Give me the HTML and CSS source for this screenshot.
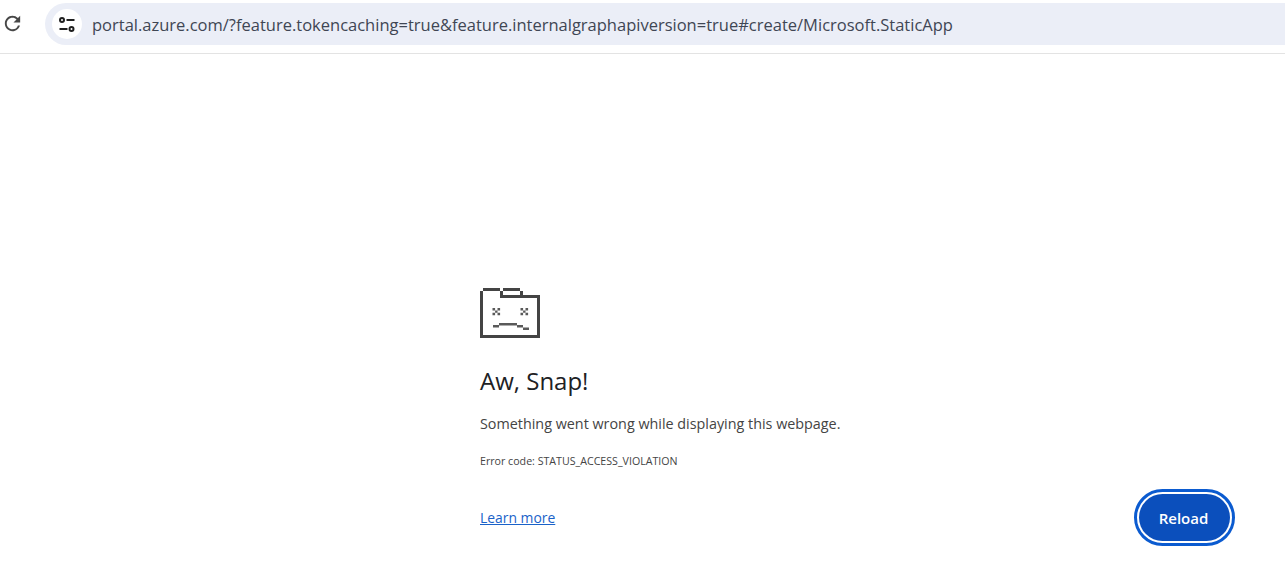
FILE: index.html
```html
<!DOCTYPE html>
<html lang="en">
<head>
<meta charset="utf-8">
<title>Aw, Snap!</title>
<link rel="stylesheet" href="styles.css">
</head>
<body>
<header class="toolbar">
  <svg class="reload-icon" width="23" height="23" viewBox="0 0 24 24" fill="#474747">
    <path d="M17.65 6.35A7.958 7.958 0 0 0 12 4c-4.42 0-7.99 3.58-7.99 8s3.57 8 7.99 8c3.73 0 6.84-2.55 7.73-6h-2.08A5.99 5.99 0 0 1 12 18c-3.31 0-6-2.69-6-6s2.69-6 6-6c1.66 0 3.14.69 4.22 1.78L13 11h7V4l-2.35 2.35z"/>
  </svg>
  <div class="omnibox">
    <span class="site-chip">
      <svg width="16" height="15" viewBox="0 0 16 15" fill="none" stroke="#1f1f1f" stroke-width="2">
        <circle cx="3" cy="3" r="2"/>
        <path d="M7.5 3h8"/>
        <path d="M.5 12h8"/>
        <circle cx="12.5" cy="12" r="2"/>
      </svg>
    </span>
    <span class="url">portal.azure.com/?feature.tokencaching=true&amp;feature.internalgraphapiversion=true#create/Microsoft.StaticApp</span>
  </div>
</header>
<main class="error-page">
  <svg class="sad-tab" width="60" height="50" viewBox="0 0 60 50" fill="#444" shape-rendering="crispEdges">
    <rect x="3" y="0" width="17" height="3"/>
    <rect x="23" y="0" width="17" height="3"/>
    <rect x="0" y="3" width="3" height="47"/>
    <rect x="20" y="3" width="3" height="7"/>
    <rect x="40" y="3" width="3" height="4"/>
    <rect x="23" y="7" width="34" height="3"/>
    <rect x="57" y="7" width="3" height="43"/>
    <rect x="0" y="47" width="60" height="3"/>
    <g fill="#5a5a5a" shape-rendering="auto">
      <path d="M12.5 20h2.6v2.4h2.4V20h2.6v2.4h-2.6v2.4h2.6v2.4h-2.6v-2.4h-2.4v2.4h-2.6v-2.4h2.6v-2.4h-2.6z"/>
      <path d="M40.500 20h2.600v2.400h2.400V20h2.600v2.400h-2.600v2.400h2.600v2.400h-2.600v-2.400h-2.400v2.400h-2.600v-2.400h2.600v-2.400h-2.600z"/>
      <rect x="13" y="37" width="6" height="2.5"/>
      <rect x="19" y="35" width="18" height="2.5"/>
      <rect x="37" y="37" width="6" height="2.5"/>
      <rect x="43" y="39.500" width="6" height="2.500"/>
    </g>
  </svg>
  <h1 class="title">Aw, Snap!</h1>
  <p class="message">Something went wrong while displaying this webpage.</p>
  <p class="code">Error code: STATUS_ACCESS_VIOLATION</p>
  <div class="actions">
    <a class="learn" href="#">Learn more</a>
    <button class="reload-button" type="button">Reload</button>
  </div>
</main>
</body>
</html>
```

FILE: styles.css
```css
* { box-sizing: border-box; }
html, body { margin: 0; height: 100%; background: #fff; overflow: hidden; }
body { font-family: "Open Sans", "Noto Sans", sans-serif; color: #3c3c3c; }
.toolbar {
  height: 54px;
  border-bottom: 1px solid #e3e3e3;
  display: flex;
  align-items: flex-start;
  padding: 3px 0 0 1px;
}
.reload-icon { margin: 9px 21px 0 0; flex: none; }
.omnibox {
  flex: 1;
  height: 42px;
  background: #ebeef7;
  border-radius: 21px 0 0 21px;
  display: flex;
  align-items: center;
  padding-left: 7px;
  gap: 10px;
}
.site-chip {
  width: 30px;
  height: 30px;
  border-radius: 50%;
  background: #fff;
  display: flex;
  align-items: center;
  justify-content: center;
  flex: none;
}
.url { font-size: 16.5px; color: #3f4654; white-space: nowrap; }
.error-page { padding: 234px 50px 0 480px; display: flex; flex-direction: column; align-items: flex-start; }
.sad-tab { display: block; }
.title { font-size: 24px; font-weight: 400; line-height: 32px; margin: 27px 0 0; color: #202124; }
.message { font-size: 14.35px; line-height: 20px; margin: 17px 0 0; color: #444; }
.code { font-size: 10.65px; line-height: 14px; margin: 20px 0 0; color: #444; }
.actions { align-self: stretch; display: flex; justify-content: space-between; align-items: center; margin-top: 21px; }
.learn { font-size: 13.9px; color: #1a62c9; text-decoration: underline; }
.reload-button {
  width: 91px;
  height: 47px;
  margin: 5px;
  padding: 0 2px 0 0;
  border: 0;
  border-radius: 24px;
  background: #0b4fbc;
  color: #fff;
  font: 600 15px "Open Sans", sans-serif;
  outline: 3px solid #0b5bd0;
  outline-offset: 2px;
}
```
